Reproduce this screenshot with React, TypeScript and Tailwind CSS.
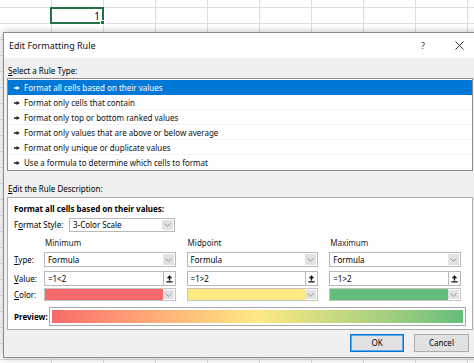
import React from 'react';

const ruleTypes = [
  'Format all cells based on their values',
  'Format only cells that contain',
  'Format only top or bottom ranked values',
  'Format only values that are above or below average',
  'Format only unique or duplicate values',
  'Use a formula to determine which cells to format',
];

const columns = [
  { title: 'Minimum', value: '=1<2', color: 'bg-[#f8696b]' },
  { title: 'Midpoint', value: '=1>2', color: 'bg-[#ffe983]' },
  { title: 'Maximum', value: '=1>2', color: 'bg-[#63be7b]' },
];

function Chevron() {
  return (
    <svg width="7" height="4" viewBox="0 0 7 4">
      <path d="M0.5 0.5 L3.5 3.3 L6.5 0.5" fill="none" stroke="#8a8a8a" strokeWidth="0.9" />
    </svg>
  );
}

function DropButton() {
  return (
    <div className="w-[11px] my-[1px] mr-[1px] bg-[#e2e2e2] flex items-center justify-center">
      <Chevron />
    </div>
  );
}

function CollapseIcon() {
  return (
    <svg width="7" height="8" viewBox="0 0 7 8">
      <path d="M3.5 0.3 L6.3 3.3 H0.7 Z" fill="#111" />
      <rect x="2.8" y="3" width="1.4" height="2.6" fill="#111" />
      <rect x="0.4" y="6.2" width="6.2" height="1.3" fill="#111" />
    </svg>
  );
}

function SelectBox({ text, className }: { text: string; className: string }) {
  return (
    <div className={`flex border border-[#b9b9b9] bg-white ${className}`}>
      <div className="flex-1 pl-[3px] flex items-center">{text}</div>
      <DropButton />
    </div>
  );
}

function Mnemonic({ pre, ch, post }: { pre?: string; ch: string; post: string }) {
  return (
    <span>
      {pre}
      <span className="underline underline-offset-[1px]">{ch}</span>
      {post}
    </span>
  );
}

function Arrow({ white }: { white?: boolean }) {
  return (
    <svg width="6" height="4" viewBox="0 0 6 4" className="mr-[4px]">
      <path d="M0 1.3 H2.5 V0 L6 2 L2.5 4 V2.7 H0 Z" fill={white ? '#fff' : '#222'} />
    </svg>
  );
}

export default function App() {
  const cells = Array.from({ length: 26 * 10 });

  return (
    <div className="relative w-[474px] h-[363px] overflow-hidden bg-white font-['Noto_Sans','Liberation_Sans',sans-serif] text-[8px] text-black">
      {/* worksheet behind the dialog */}
      <div className="grid grid-cols-[repeat(10,52px)] -mt-[8px]">
        {cells.map((_, i) => (
          <div key={i} className="h-[16px] border-r border-b border-[#dedede]" />
        ))}
      </div>
      <div className="absolute left-[50px] top-[7px] w-[54px] h-[17px] border-2 border-[#217346] flex items-center justify-end pr-[2px] text-[10px] leading-none">
        1
        <div className="absolute -right-[3px] -bottom-[3px] w-[5px] h-[5px] bg-[#217346] border border-white" />
      </div>

      {/* dialog */}
      <div className="absolute left-[3px] top-[32px] w-[490px] h-[326px] border border-[#8e8e8e] bg-[#f0f0f0] shadow-[0_0_7px_rgba(0,0,0,0.28)] flex flex-col">
        <div className="h-[25px] bg-white flex items-center">
          <div className="pl-[5px] text-[9px] text-[#111] w-[414px]">Edit Formatting Rule</div>
          <div className="w-[10px] text-center text-[9px] text-[#333]">?</div>
          <svg width="9" height="9" viewBox="0 0 9 9" className="ml-[27px]">
            <path d="M0.5 0.5 L8.5 8.5 M8.5 0.5 L0.5 8.5" stroke="#222" strokeWidth="0.9" />
          </svg>
        </div>

        <div className="pl-[4px] mt-[7px] h-[12px] flex items-center">
          <Mnemonic ch="S" post="elect a Rule Type:" />
        </div>
        <div className="ml-[3px] mt-[1px] w-[466px] h-[93px] border border-[#8c8c8c] bg-white pt-[1px]">
          {ruleTypes.map((t, i) => (
            <div
              key={t}
              className={`h-[15px] flex items-center pl-[6px] pt-[1px] ${
                i === 0 ? 'bg-[#0078d7] text-white' : 'text-[#111] border-b border-[#f3f3f3]'
              }`}
            >
              <Arrow white={i === 0} />
              {t}
            </div>
          ))}
        </div>

        <div className="pl-[4px] mt-[12px] h-[12px] flex items-center">
          <Mnemonic ch="E" post="dit the Rule Description:" />
        </div>
        <div className="ml-[3px] mt-[2px] w-[466px] h-[133px] border border-[#acacac] bg-white pl-[6px] flex flex-col">
          <div className="mt-[5px] h-[12px] flex items-center font-bold">Format all cells based on their values:</div>
          <div className="mt-[3px] flex items-center h-[14px]">
            <div className="w-[55px]">
              <Mnemonic pre="F" ch="o" post="rmat Style:" />
            </div>
            <SelectBox text="3-Color Scale" className="w-[106px] h-[14px]" />
          </div>

          <div className="mt-[5px] h-[12px] flex">
            <div className="w-[30px]" />
            {columns.map((c) => (
              <div key={c.title} className="w-[132px] mr-[11px] pl-[1px] flex items-center text-[#222]">
                {c.title}
              </div>
            ))}
          </div>

          <div className="mt-[3px] h-[15px] flex">
            <div className="w-[30px] flex items-center">
              <Mnemonic ch="T" post="ype:" />
            </div>
            {columns.map((c) => (
              <SelectBox key={c.title} text="Formula" className="w-[132px] mr-[11px]" />
            ))}
          </div>

          <div className="mt-[4px] h-[15px] flex">
            <div className="w-[30px] flex items-center">
              <Mnemonic ch="V" post="alue:" />
            </div>
            {columns.map((c) => (
              <div key={c.title} className="w-[132px] mr-[11px] flex border border-[#b9b9b9] bg-white">
                <div className="flex-1 pl-[3px] flex items-center">{c.value}</div>
                <div className="w-[12px] border-l border-[#b9b9b9] flex items-center justify-center">
                  <CollapseIcon />
                </div>
              </div>
            ))}
          </div>

          <div className="mt-[2px] h-[13px] flex">
            <div className="w-[30px] flex items-center">
              <Mnemonic ch="C" post="olor:" />
            </div>
            {columns.map((c) => (
              <div key={c.title} className="w-[132px] mr-[11px] flex border border-[#c4c4c4] bg-white">
                <div className={`flex-1 ${c.color}`} />
                <DropButton />
              </div>
            ))}
          </div>

          <div className="mt-[6px] h-[19px] flex">
            <div className="w-[35px] flex items-center font-bold">Preview:</div>
            <div className="w-[417px] border border-[#a9a9a9] p-[2px] bg-white">
              <div className="h-full bg-linear-to-r from-[#f8696b] via-[#ffe983] to-[#63be7b]" />
            </div>
          </div>
        </div>

        <div className="ml-[3px] mt-[4px] w-[466px] pr-[4px] flex justify-end gap-[10px]">
          <button className="w-[54px] h-[18px] border border-[#0078d7] shadow-[inset_0_0_0_1px_#5fa8e6] bg-[#e1e1e1] text-[8px]">OK</button>
          <button className="w-[55px] h-[18px] border border-[#adadad] bg-[#e1e1e1] text-[8px]">Cancel</button>
        </div>
      </div>
    </div>
  );
}
